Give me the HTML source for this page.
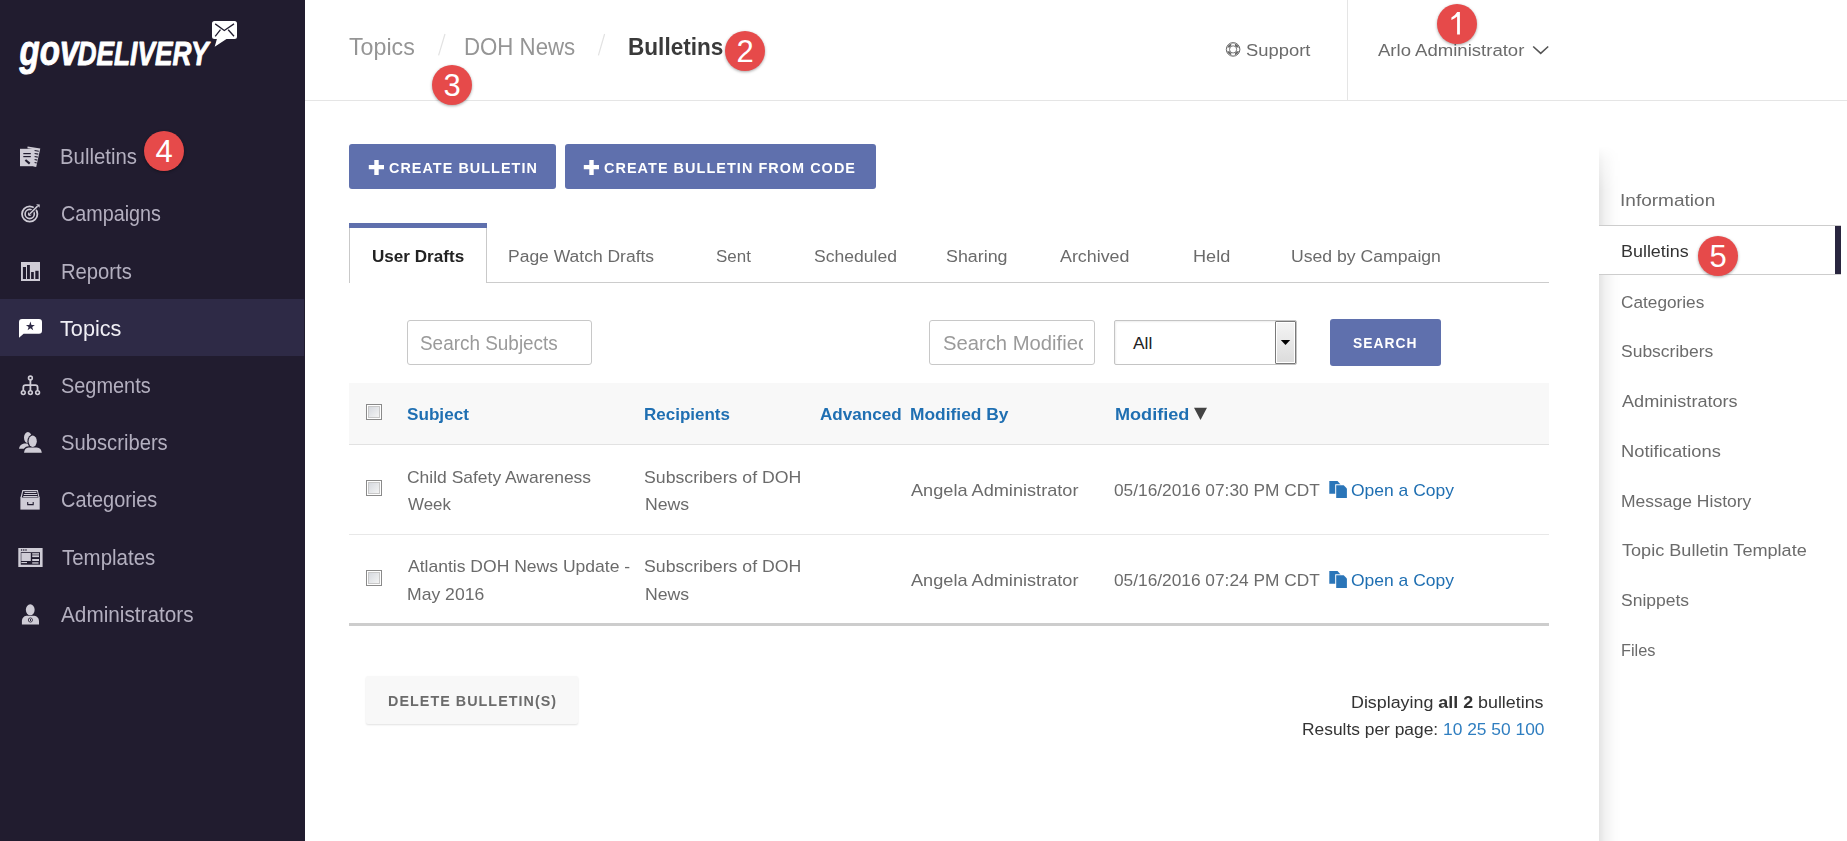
<!DOCTYPE html>
<html><head><meta charset="utf-8">
<style>
*{box-sizing:border-box;margin:0;padding:0}
html,body{width:1847px;height:841px;overflow:hidden;background:#fff;font-family:"Liberation Sans",sans-serif}
.a{position:absolute;white-space:nowrap;line-height:1}
#side{position:absolute;left:0;top:0;width:305px;height:841px;background:#211c2f}
#side .act{position:absolute;left:0;top:299px;width:304px;height:57px;background:#2e2a46}
.nav{position:absolute;left:61px;font-size:20px;color:#c6c2cf;line-height:1;white-space:nowrap}
.ico{position:absolute}
.badge{position:absolute;width:40px;height:40px;border-radius:50%;background:#e64a4a;color:#fff;font-size:31px;line-height:42px;text-align:center;box-shadow:0 1px 3px rgba(0,0,0,.35)}
#hdr{position:absolute;left:305px;top:0;width:1542px;height:101px;border-bottom:1px solid #e5e5e5}
.btn{position:absolute;background:#5f70ad;border-radius:3px;color:#fff}
.tab{position:absolute;font-size:17px;color:#6b6b6b;line-height:1;white-space:nowrap}
.th{position:absolute;font-size:17px;font-weight:bold;color:#2874b2;line-height:1;white-space:nowrap}
.td{position:absolute;font-size:17px;color:#6b6b6b;line-height:1;white-space:nowrap}
.cb{position:absolute;left:366px;width:16px;height:16px;border:1px solid #8a8a8a;background:#fff}.cb:after{content:"";position:absolute;left:1px;top:1px;width:12px;height:12px;box-sizing:border-box;border:1px solid #c8c8c8;background:linear-gradient(135deg,#d6d9df,#f4f4f4)}
.rn{position:absolute;left:1621px;font-size:18px;color:#6b6b6b;line-height:1;white-space:nowrap}
</style>
</head><body>

<!-- LEFT SIDEBAR -->
<div id="side">
  <div class="act"></div>
  <svg style="position:absolute;left:0;top:0" width="305" height="100" viewBox="0 0 305 100">
    <g fill="#fff" stroke="#fff" stroke-width="0.9" stroke-linejoin="round" font-family="Liberation Sans" font-weight="bold" font-style="italic">
      <text x="19.5" y="64.6" font-size="43" textLength="59" lengthAdjust="spacingAndGlyphs">gov</text>
      <text x="77.5" y="64.6" font-size="32.5" textLength="131" lengthAdjust="spacingAndGlyphs">DELIVERY</text>
    </g>
    <path d="M214.5 21h20a2.5 2.5 0 0 1 2.5 2.5v13a2.5 2.5 0 0 1-2.5 2.5h-8l-11.8 7.7 2.2-7.7h-2.4a2.5 2.5 0 0 1-2.5-2.5v-13a2.5 2.5 0 0 1 2.5-2.5z" fill="#fff"/>
    <path d="M215.2 23.9l9.1 6.6 9.7-6.6M215.2 36.3l5.3-6.6M234 36.3l-5.8-6.6" fill="none" stroke="#211c2f" stroke-width="1.3"/>
  </svg>
  <svg style="position:absolute;left:0;top:0" width="305" height="700" viewBox="0 0 305 700">
    <g fill="#cfccd6">
      <!-- bulletins -->
      <path d="M27.6 146.4L40.3 148.6L36.2 167L33.5 166.6L34 149.2L27.4 148.2Z"/>
      <rect x="20" y="148.8" width="14" height="17.4"/>
      <!-- reports -->
      <rect x="21" y="262" width="19" height="19"/>
      <!-- categories -->
      <path d="M22.4 490H37.8L39.7 498H20.4Z"/>
      <rect x="20.4" y="497.5" width="19.3" height="12.1"/>
      <!-- templates -->
      <rect x="18.3" y="548" width="24.3" height="19"/>
      <!-- admins -->
      <ellipse cx="30.25" cy="609.8" rx="4.4" ry="5.5"/>
      <path d="M21.9 624.6V620.8Q22.3 616.6 26.3 615.8L34.3 615.8Q38.6 616.6 39 620.8V624.6Z"/>
      <!-- subscribers -->
      <ellipse cx="27.9" cy="437.6" rx="3.9" ry="5.5"/>
      <path d="M19 448.8Q19.6 444.4 24 443.6L30 443.6L31 448.8Z"/>
    </g>
    <g fill="#211c2f">
      <!-- bulletins details -->
      <path d="M34.6 150.5L38.8 151.2M34.6 153.5L38.3 154.1M34.6 156.5L37.8 157.1M34.6 159.5L37.3 160.1M34.6 162.5L36.8 163" stroke="#211c2f" stroke-width="1.1"/>
      <rect x="23.3" y="153" width="7.5" height="1.2"/>
      <rect x="23.3" y="156" width="7.5" height="1.2"/>
      <path d="M25.4 160L29.7 163.6" stroke="#211c2f" stroke-width="2.2"/>
      <!-- reports bars -->
      <rect x="22.9" y="267" width="3.1" height="12"/>
      <rect x="27" y="265" width="2.9" height="14"/>
      <rect x="31.1" y="272" width="2.7" height="7"/>
      <rect x="35.3" y="270.8" width="3.3" height="8.2"/>
      <!-- categories -->
      <path d="M23.2 491.2H37L38.5 497.5H21.8Z"/>
      <path d="M27.7 502V504.6H33.2V502" fill="none" stroke="#211c2f" stroke-width="1.1"/>
      <!-- templates -->
      <rect x="20.8" y="552.2" width="19.2" height="12.5"/>
      <circle cx="21.6" cy="550" r="0.8"/><circle cx="23.8" cy="550" r="0.8"/><circle cx="26" cy="550" r="0.8"/>
      <!-- admin badge -->
      <circle cx="30.4" cy="620" r="2.1" fill="none" stroke="#211c2f" stroke-width="0.8"/>
      <rect x="30" y="619" width="0.9" height="2"/>
      <!-- subscribers front person outline -->
      <ellipse cx="32.7" cy="441.3" rx="5.3" ry="6.9"/>
      <path d="M22.6 453.5Q23 446.6 28.4 446.2L37 446.2Q42.8 446.8 43.2 453.5Z"/>
    </g>
    <g fill="#cfccd6">
      <rect x="24.6" y="492" width="11.8" height="1"/>
      <rect x="23.8" y="494" width="13.4" height="1"/>
      <rect x="23.2" y="496" width="14.4" height="1"/>
      <rect x="21.3" y="553" width="9.5" height="8"/>
      <rect x="21.3" y="562" width="5.7" height="1.1"/>
      <rect x="32.2" y="553.2" width="6.8" height="1.4"/>
      <rect x="32.2" y="555.3" width="6.8" height="1.8"/>
      <rect x="32.2" y="559" width="6.8" height="2"/>
      <rect x="32.2" y="562.3" width="6.3" height="1.3"/>
      <ellipse cx="32.7" cy="441.3" rx="4.1" ry="5.7"/>
      <path d="M24 452.7Q24.4 447.9 28.6 447.4L36.8 447.4Q41.4 447.9 41.8 452.7Z"/>
    </g>
    <!-- campaigns target -->
    <g fill="none" stroke="#cfccd6">
      <circle cx="29.7" cy="214" r="7.7" stroke-width="1.8"/>
      <circle cx="29.7" cy="214" r="4.6" stroke-width="1.6"/>
    </g>
    <circle cx="29.7" cy="214" r="1.9" fill="#cfccd6"/>
    <path d="M29.7 214L38 205.7" stroke="#211c2f" stroke-width="3.2"/>
    <path d="M29.7 214L37.6 206.1" stroke="#cfccd6" stroke-width="1.5"/>
    <path d="M36.2 204.3L39.8 204.4L39.5 207.8Z" fill="#cfccd6"/>
    <!-- segments -->
    <g fill="none" stroke="#cfccd6" stroke-width="1.6">
      <circle cx="30.4" cy="378" r="1.9"/>
      <circle cx="23.3" cy="392.6" r="1.9"/>
      <circle cx="30.4" cy="392.6" r="1.9"/>
      <circle cx="37.6" cy="392.6" r="1.9"/>
      <path d="M30.4 379.9V390.7M23.3 390.7V387.4Q23.3 385.2 25.5 385.2H35.4Q37.6 385.2 37.6 387.4V390.7" stroke-width="1.8"/>
    </g>
    <!-- topics bubble -->
    <path d="M22 319H39A3 3 0 0 1 42 322V330.7A3 3 0 0 1 39 333.7H23.6L19 337.8V322A3 3 0 0 1 22 319Z" fill="#fff"/>
    <path d="M30.4 321.6L31.5 324.9H34.9L32.2 326.9L33.2 330.2L30.4 328.2L27.6 330.2L28.6 326.9L25.9 324.9H29.3Z" fill="#2e2a46"/>
  </svg>
</div>

<!-- HEADER -->
<div id="hdr"></div>
<div style="position:absolute;left:1347px;top:0;width:1px;height:100px;background:#e5e5e5"></div>
<svg style="position:absolute;left:430px;top:30px" width="20" height="30" viewBox="430 30 20 30"><path d="M445 34L438.6 55.3" stroke="#e2e2e2" stroke-width="1.2"/></svg>
<svg style="position:absolute;left:590px;top:30px" width="20" height="30" viewBox="590 30 20 30"><path d="M604.6 34L598.4 55.3" stroke="#e2e2e2" stroke-width="1.2"/></svg>
<svg style="position:absolute;left:1224px;top:40px" width="20" height="20" viewBox="1224 40 20 20">
  <circle cx="1233.1" cy="49.4" r="5" fill="none" stroke="#6a6a6a" stroke-width="2.4"/>
  <path d="M1231.3 43.4h3.6v2.6h-3.6zM1231.3 52.8h3.6v2.6h-3.6zM1227.1 47.6h2.6v3.6h-2.6zM1236.5 47.6h2.6v3.6h-2.6z" fill="#fff"/>
  <circle cx="1233.1" cy="49.4" r="6.8" fill="none" stroke="#6a6a6a" stroke-width="1"/>
  <circle cx="1233.1" cy="49.4" r="3.6" fill="none" stroke="#6a6a6a" stroke-width="0.9"/>
</svg>
<svg style="position:absolute;left:1530px;top:42px" width="22" height="16" viewBox="1530 42 22 16">
  <path d="M1533.2 46.5L1540.7 53.3L1548.2 46.5" fill="none" stroke="#555" stroke-width="1.6"/>
</svg>

<!-- BUTTONS -->
<div class="btn" style="left:349px;top:144px;width:207px;height:45px"></div>
<div class="btn" style="left:565px;top:144px;width:311px;height:45px"></div>
<svg style="position:absolute;left:368px;top:159px" width="18" height="18" viewBox="368 159 18 18"><path d="M374.3 160h4.4v5h5.3v4.3h-5.3v5.7h-4.4v-5.7h-5.5v-4.3h5.5z" fill="#fff"/></svg>
<svg style="position:absolute;left:583px;top:159px" width="18" height="18" viewBox="368 159 18 18"><path d="M374.3 160h4.4v5h5.3v4.3h-5.3v5.7h-4.4v-5.7h-5.5v-4.3h5.5z" fill="#fff"/></svg>

<!-- TABS -->
<div style="position:absolute;left:349px;top:282px;width:1200px;height:1px;background:#cccccc"></div>
<div style="position:absolute;left:349px;top:227px;width:138px;height:56px;background:#fff;border:1px solid #c9c9c9;border-bottom:none;border-top:none"></div>
<div style="position:absolute;left:349px;top:223px;width:138px;height:5px;background:#5f70ad"></div>

<!-- SEARCH ROW -->
<div style="position:absolute;left:407px;top:320px;width:185px;height:45px;border:1px solid #c8c8c8;border-radius:3px"></div>
<div style="position:absolute;left:929px;top:320px;width:166px;height:45px;border:1px solid #c8c8c8;border-radius:3px"></div>
<div style="position:absolute;left:1114px;top:320px;width:183px;height:45px;border:1px solid #c4c4c4;border-radius:2px;box-shadow:inset 1px 1px 2px rgba(0,0,0,.07)"></div>
<div style="position:absolute;left:1275px;top:321px;width:21px;height:43px;border:1px solid #7a7a7a;border-radius:1px;background:linear-gradient(#f4f4f4,#dcdcdc);box-shadow:inset 0 0 0 1px #fff"></div>
<svg style="position:absolute;left:1280px;top:339px" width="12" height="8" viewBox="0 0 12 8"><path d="M0.8 0.9H10.2L5.5 6Z" fill="#000"/></svg>
<div class="btn" style="left:1330px;top:319px;width:111px;height:47px"></div>

<!-- TABLE -->
<div style="position:absolute;left:349px;top:383px;width:1200px;height:62px;background:#f8f8f8;border-bottom:1px solid #e2e2e2"></div>
<div class="cb" style="top:404px"></div>
<svg style="position:absolute;left:1193px;top:407px" width="15" height="14" viewBox="0 0 15 14"><path d="M1 0.8H14L7.5 13Z" fill="#444"/></svg>
<div style="position:absolute;left:349px;top:534px;width:1200px;height:1px;background:#e8e8e8"></div>
<div style="position:absolute;left:349px;top:623px;width:1200px;height:3px;background:#cdcdcd"></div>
<div class="cb" style="top:480px"></div>
<div class="cb" style="top:570px"></div>
<svg style="position:absolute;left:1328px;top:480px" width="20" height="19" viewBox="1328 480 20 19">
  <path d="M1329.3 481H1337.5L1340.6 484.4V493.8H1329.3Z" fill="#2a75b8"/>
  <path d="M1335.2 484.3H1343.9L1347.9 488.4V499H1335.2Z" fill="#fff"/>
  <path d="M1336.2 485.3H1343.7L1346.9 488.4V498H1336.2Z" fill="#2a75b8"/>
</svg>
<svg style="position:absolute;left:1328px;top:570px" width="20" height="19" viewBox="1328 480 20 19">
  <path d="M1329.3 481H1337.5L1340.6 484.4V493.8H1329.3Z" fill="#2a75b8"/>
  <path d="M1335.2 484.3H1343.9L1347.9 488.4V499H1335.2Z" fill="#fff"/>
  <path d="M1336.2 485.3H1343.7L1346.9 488.4V498H1336.2Z" fill="#2a75b8"/>
</svg>

<!-- FOOTER -->
<div style="position:absolute;left:366px;top:676px;width:212px;height:48px;background:#f8f8f8;border-radius:2px;box-shadow:0 1px 2px rgba(0,0,0,.12)"></div>

<!-- RIGHT SIDEBAR -->
<div style="position:absolute;left:1599px;top:146px;width:22px;height:695px;background:linear-gradient(90deg,rgba(0,0,0,.105),rgba(0,0,0,.05) 30%,rgba(0,0,0,.012) 70%,rgba(0,0,0,0));-webkit-mask-image:linear-gradient(180deg,transparent 0,rgba(0,0,0,.5) 15px,#000 45px);mask-image:linear-gradient(180deg,transparent 0,rgba(0,0,0,.5) 15px,#000 45px)"></div>
<div style="position:absolute;left:1599px;top:225px;width:242px;height:50px;background:#fff;border-top:1px solid #cdcdcd;border-bottom:1px solid #cdcdcd"></div>
<div style="position:absolute;left:1835px;top:226px;width:6px;height:48px;background:#29263f"></div>

<div class="a" style="left:60.41px;top:147px;font-size:21.5px;font-weight:normal;color:#b3afbf;transform:scaleX(0.9468);transform-origin:0 0;">Bulletins</div>
<div class="a" style="left:60.88px;top:204px;font-size:21.5px;font-weight:normal;color:#b3afbf;transform:scaleX(0.9187);transform-origin:0 0;">Campaigns</div>
<div class="a" style="left:60.52px;top:262px;font-size:21.5px;font-weight:normal;color:#b3afbf;transform:scaleX(0.9411);transform-origin:0 0;">Reports</div>
<div class="a" style="left:60.1px;top:319px;font-size:21.5px;font-weight:normal;color:#f0eff5;transform:scaleX(1.0083);transform-origin:0 0;">Topics</div>
<div class="a" style="left:60.67px;top:376px;font-size:21.5px;font-weight:normal;color:#b3afbf;transform:scaleX(0.9263);transform-origin:0 0;">Segments</div>
<div class="a" style="left:60.66px;top:433px;font-size:21.5px;font-weight:normal;color:#b3afbf;transform:scaleX(0.9402);transform-origin:0 0;">Subscribers</div>
<div class="a" style="left:60.67px;top:490px;font-size:21.5px;font-weight:normal;color:#b3afbf;transform:scaleX(0.9265);transform-origin:0 0;">Categories</div>
<div class="a" style="left:61.6px;top:548px;font-size:21.5px;font-weight:normal;color:#b3afbf;transform:scaleX(0.9515);transform-origin:0 0;">Templates</div>
<div class="a" style="left:61px;top:605px;font-size:21.5px;font-weight:normal;color:#b3afbf;transform:scaleX(0.9650);transform-origin:0 0;">Administrators</div>
<div class="a" style="left:349px;top:35px;font-size:24px;font-weight:normal;color:#959595;transform:scaleX(0.9672);transform-origin:0 0;">Topics</div>
<div class="a" style="left:463.75px;top:35px;font-size:24px;font-weight:normal;color:#959595;transform:scaleX(0.9265);transform-origin:0 0;">DOH News</div>
<div class="a" style="left:628.42px;top:35px;font-size:24px;font-weight:bold;color:#3a3a3a;transform:scaleX(0.9414);transform-origin:0 0;">Bulletins</div>
<div class="a" style="left:1245.64px;top:42px;font-size:17.4px;font-weight:normal;color:#6b6b6b;transform:scaleX(1.0567);transform-origin:0 0;">Support</div>
<div class="a" style="left:1378.1px;top:42px;font-size:17.4px;font-weight:normal;color:#6b6b6b;transform:scaleX(1.0664);transform-origin:0 0;">Arlo Administrator</div>
<div class="a" style="left:388.95px;top:160px;font-size:15.2px;font-weight:bold;color:#fff;letter-spacing:1.1px;transform:scaleX(0.9474);transform-origin:0 0;">CREATE BULLETIN</div>
<div class="a" style="left:604.35px;top:160px;font-size:15.2px;font-weight:bold;color:#fff;letter-spacing:1.1px;transform:scaleX(0.9506);transform-origin:0 0;">CREATE BULLETIN FROM CODE</div>
<div class="a" style="left:1353.09px;top:335px;font-size:15.2px;font-weight:bold;color:#fff;letter-spacing:1.1px;transform:scaleX(0.9103);transform-origin:0 0;">SEARCH</div>
<div class="a" style="left:388.36px;top:693px;font-size:15.2px;font-weight:bold;color:#6b6b6b;letter-spacing:1.1px;transform:scaleX(0.9437);transform-origin:0 0;">DELETE BULLETIN(S)</div>
<div class="a" style="left:371.91px;top:248px;font-size:17.3px;font-weight:bold;color:#222;transform:scaleX(0.9891);transform-origin:0 0;">User Drafts</div>
<div class="a" style="left:507.99px;top:248px;font-size:17.3px;font-weight:normal;color:#6b6b6b;transform:scaleX(1.0119);transform-origin:0 0;">Page Watch Drafts</div>
<div class="a" style="left:716.02px;top:248px;font-size:17.3px;font-weight:normal;color:#6b6b6b;transform:scaleX(0.9800);transform-origin:0 0;">Sent</div>
<div class="a" style="left:813.59px;top:248px;font-size:17.3px;font-weight:normal;color:#6b6b6b;transform:scaleX(1.0150);transform-origin:0 0;">Scheduled</div>
<div class="a" style="left:945.87px;top:248px;font-size:17.3px;font-weight:normal;color:#6b6b6b;transform:scaleX(1.0328);transform-origin:0 0;">Sharing</div>
<div class="a" style="left:1059.8px;top:248px;font-size:17.3px;font-weight:normal;color:#6b6b6b;transform:scaleX(1.0333);transform-origin:0 0;">Archived</div>
<div class="a" style="left:1192.55px;top:248px;font-size:17.3px;font-weight:normal;color:#6b6b6b;transform:scaleX(1.0471);transform-origin:0 0;">Held</div>
<div class="a" style="left:1290.58px;top:248px;font-size:17.3px;font-weight:normal;color:#6b6b6b;transform:scaleX(1.0200);transform-origin:0 0;">Used by Campaign</div>
<div class="a" style="left:420.28px;top:333px;font-size:20.5px;font-weight:normal;color:#9a9a9a;transform:scaleX(0.9230);transform-origin:0 0;">Search Subjects</div>
<div style="position:absolute;left:930px;top:321px;width:153px;height:43px;overflow:hidden">
<div class="a" style="left:12.51px;top:12px;font-size:20.5px;font-weight:normal;color:#9a9a9a;transform:scaleX(0.9870);transform-origin:0 0;">Search Modified</div>
</div>
<div class="a" style="left:1133px;top:335px;font-size:17.4px;font-weight:normal;color:#222;">All</div>
<div class="a" style="left:406.71px;top:406px;font-size:17.3px;font-weight:bold;color:#1f6fb2;transform:scaleX(0.9918);transform-origin:0 0;">Subject</div>
<div class="a" style="left:644.42px;top:406px;font-size:17.3px;font-weight:bold;color:#1f6fb2;transform:scaleX(0.9837);transform-origin:0 0;">Recipients</div>
<div class="a" style="left:819.61px;top:406px;font-size:17.3px;font-weight:bold;color:#1f6fb2;transform:scaleX(0.9877);transform-origin:0 0;">Advanced</div>
<div class="a" style="left:910.29px;top:406px;font-size:17.3px;font-weight:bold;color:#1f6fb2;transform:scaleX(1.0062);transform-origin:0 0;">Modified By</div>
<div class="a" style="left:1115.05px;top:406px;font-size:17.3px;font-weight:bold;color:#1f6fb2;transform:scaleX(1.0464);transform-origin:0 0;">Modified</div>
<div class="a" style="left:406.77px;top:469px;font-size:17px;font-weight:normal;color:#6b6b6b;transform:scaleX(1.0270);transform-origin:0 0;">Child Safety Awareness</div>
<div class="a" style="left:407.9px;top:496px;font-size:17px;font-weight:normal;color:#6b6b6b;transform:scaleX(0.9930);transform-origin:0 0;">Week</div>
<div class="a" style="left:644.36px;top:469px;font-size:17px;font-weight:normal;color:#6b6b6b;transform:scaleX(1.0409);transform-origin:0 0;">Subscribers of DOH</div>
<div class="a" style="left:644.76px;top:496px;font-size:17px;font-weight:normal;color:#6b6b6b;transform:scaleX(1.0390);transform-origin:0 0;">News</div>
<div class="a" style="left:910.6px;top:482px;font-size:17px;font-weight:normal;color:#6b6b6b;transform:scaleX(1.0675);transform-origin:0 0;">Angela Administrator</div>
<div class="a" style="left:1113.98px;top:482px;font-size:17px;font-weight:normal;color:#6b6b6b;transform:scaleX(1.0174);transform-origin:0 0;">05/16/2016 07:30 PM CDT</div>
<div class="a" style="left:1350.97px;top:482px;font-size:17px;font-weight:normal;color:#1f6fb2;transform:scaleX(1.0283);transform-origin:0 0;">Open a Copy</div>
<div class="a" style="left:407.8px;top:558px;font-size:17px;font-weight:normal;color:#6b6b6b;transform:scaleX(1.0312);transform-origin:0 0;">Atlantis DOH News Update -</div>
<div class="a" style="left:406.87px;top:586px;font-size:17px;font-weight:normal;color:#6b6b6b;transform:scaleX(1.0342);transform-origin:0 0;">May 2016</div>
<div class="a" style="left:644.36px;top:558px;font-size:17px;font-weight:normal;color:#6b6b6b;transform:scaleX(1.0409);transform-origin:0 0;">Subscribers of DOH</div>
<div class="a" style="left:644.76px;top:586px;font-size:17px;font-weight:normal;color:#6b6b6b;transform:scaleX(1.0390);transform-origin:0 0;">News</div>
<div class="a" style="left:910.6px;top:572px;font-size:17px;font-weight:normal;color:#6b6b6b;transform:scaleX(1.0675);transform-origin:0 0;">Angela Administrator</div>
<div class="a" style="left:1113.98px;top:572px;font-size:17px;font-weight:normal;color:#6b6b6b;transform:scaleX(1.0174);transform-origin:0 0;">05/16/2016 07:24 PM CDT</div>
<div class="a" style="left:1350.97px;top:572px;font-size:17px;font-weight:normal;color:#1f6fb2;transform:scaleX(1.0283);transform-origin:0 0;">Open a Copy</div>
<div class="a" style="left:1350.97px;top:694px;font-size:17.3px;font-weight:normal;color:#333;transform:scaleX(1.0330);transform-origin:0 0;">Displaying <b>all 2</b> bulletins</div>
<div class="a" style="left:1301.79px;top:721px;font-size:17.3px;font-weight:normal;color:#333;transform:scaleX(1.0054);transform-origin:0 0;">Results per page: <span style="color:#2f7ec0">10 25 50 100</span></div>
<div class="a" style="left:1620.21px;top:192px;font-size:17.4px;font-weight:normal;color:#6b6b6b;transform:scaleX(1.0952);transform-origin:0 0;">Information</div>
<div class="a" style="left:1621.37px;top:243px;font-size:17.4px;font-weight:normal;color:#333;transform:scaleX(1.0297);transform-origin:0 0;">Bulletins</div>
<div class="a" style="left:1621.41px;top:294px;font-size:17.4px;font-weight:normal;color:#6b6b6b;transform:scaleX(0.9904);transform-origin:0 0;">Categories</div>
<div class="a" style="left:1621.39px;top:343px;font-size:17.4px;font-weight:normal;color:#6b6b6b;transform:scaleX(1.0056);transform-origin:0 0;">Subscribers</div>
<div class="a" style="left:1622.4px;top:393px;font-size:17.4px;font-weight:normal;color:#6b6b6b;transform:scaleX(1.0405);transform-origin:0 0;">Administrators</div>
<div class="a" style="left:1621.35px;top:443px;font-size:17.4px;font-weight:normal;color:#6b6b6b;transform:scaleX(1.0538);transform-origin:0 0;">Notifications</div>
<div class="a" style="left:1621.39px;top:493px;font-size:17.4px;font-weight:normal;color:#6b6b6b;transform:scaleX(1.0062);transform-origin:0 0;">Message History</div>
<div class="a" style="left:1622.4px;top:542px;font-size:17.4px;font-weight:normal;color:#6b6b6b;transform:scaleX(1.0407);transform-origin:0 0;">Topic Bulletin Template</div>
<div class="a" style="left:1621.39px;top:592px;font-size:17.4px;font-weight:normal;color:#6b6b6b;transform:scaleX(1.0061);transform-origin:0 0;">Snippets</div>
<div class="a" style="left:1621.46px;top:642px;font-size:17.4px;font-weight:normal;color:#6b6b6b;transform:scaleX(0.9400);transform-origin:0 0;">Files</div>

<!-- BADGES -->
<div class="badge" style="left:1437px;top:4px"><svg width="40" height="40" viewBox="0 0 40 40" style="position:absolute;left:0;top:0"><path d="M20.2 8H22.9V30.5H20.1V12.4Q18.2 14.2 14.4 16V13.4Q18.6 11.2 20.2 8Z" fill="#fff"/></svg></div>
<div class="badge" style="left:725px;top:31px">2</div>
<div class="badge" style="left:432px;top:65px">3</div>
<div class="badge" style="left:144px;top:131px">4</div>
<div class="badge" style="left:1698px;top:236px">5</div>

</body></html>
